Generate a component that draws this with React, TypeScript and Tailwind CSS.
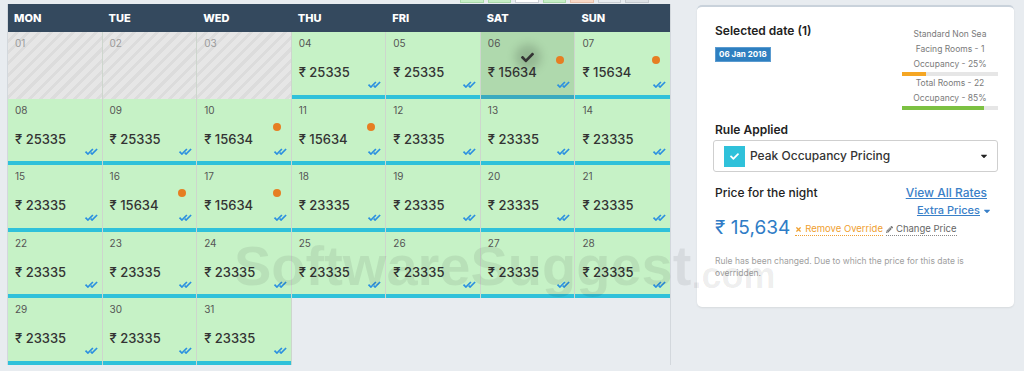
import React from "react";
import { FaCheck, FaCaretDown, FaTimes, FaPencilAlt } from "react-icons/fa";

type Day = { d: string; price?: string; dot?: boolean; sel?: boolean; off?: boolean };

const days: Day[] = [
  { d: "01", off: true },
  { d: "02", off: true },
  { d: "03", off: true },
  { d: "04", price: "25335" },
  { d: "05", price: "25335" },
  { d: "06", price: "15634", dot: true, sel: true },
  { d: "07", price: "15634", dot: true },
  { d: "08", price: "25335" },
  { d: "09", price: "25335" },
  { d: "10", price: "15634", dot: true },
  { d: "11", price: "15634", dot: true },
  { d: "12", price: "23335" },
  { d: "13", price: "23335" },
  { d: "14", price: "23335" },
  { d: "15", price: "23335" },
  { d: "16", price: "15634", dot: true },
  { d: "17", price: "15634", dot: true },
  ...Array.from({ length: 14 }, (_, i) => ({ d: String(18 + i), price: "23335" })),
];

const weekDays = ["MON", "TUE", "WED", "THU", "FRI", "SAT", "SUN"];

const legend = [
  "bg-[#c6efc6] border-[#a9d9a9]",
  "bg-[#c6efc6] border-[#a9d9a9]",
  "bg-white border-[#c9ced3]",
  "bg-[#c6efc6] border-[#a9d9a9]",
  "bg-[#f9d9c6] border-[#e7bfa8]",
  "bg-[#e9edf1] border-[#c9ced3]",
  "bg-[#dde1e5] border-[#c4c9ce]",
];

const DoubleCheck = () => (
  <svg width="16" height="7" viewBox="0 0 15 7" fill="none">
    <path d="M1 3.6L3.4 6L8.4 1" stroke="#2b90e0" strokeWidth="1.7" />
    <path d="M6.2 4.6L7.6 6L12.6 1" stroke="#2b90e0" strokeWidth="1.7" />
  </svg>
);

const Cell = ({ day, last }: { day: Day; last: boolean }) => {
  const edge = last ? "" : "border-r border-[#cdd6cd]";
  if (day.off) {
    return (
      <div
        className={`h-[66.6px] pl-[7px] pt-[5px] bg-[repeating-linear-gradient(135deg,#e6e6e6_0,#e6e6e6_5px,#dcdcdc_5px,#dcdcdc_8px)] ${edge}`}
      >
        <div className="text-[10px] leading-[13px] text-[#9b9b9b]">{day.d}</div>
      </div>
    );
  }
  return (
    <div className={`relative h-[66.6px] flex flex-col ${day.sel ? "bg-[#afd9ad]" : "bg-[#c6f2c6]"} ${edge}`}>
      <div className="pl-[7px] pt-[5px] text-[10px] leading-[13px] text-[#555]">{day.d}</div>
      <div className="pl-[7px] mt-[13px] text-[13px] leading-[18px] font-medium text-[#333]">
        ₹ {day.price}
      </div>
      <div className="flex justify-end pr-[2px]">
        <DoubleCheck />
      </div>
      <div className={`mt-auto h-[4px] ${day.sel ? "bg-[#3aaabf]" : "bg-[#2fc1da]"}`} />
      {day.dot && <div className="absolute top-[24px] right-[10px] w-[8px] h-[8px] rounded-full bg-[#e67e22]" />}
      {day.sel && (
        <div className="absolute left-[34px] top-[12px] w-[26px] h-[26px] flex items-center justify-center">
          <div className="absolute inset-0 rounded-full bg-black/15 blur-[4px]" />
          <FaCheck className="relative text-[#333] text-[13px]" />
        </div>
      )}
    </div>
  );
};

const App = () => {
  return (
    <div className="relative w-[1024px] h-[371px] overflow-hidden bg-[#e8ecf0] flex items-start font-['Inter','Noto_Sans',sans-serif]">
      <div className="ml-[7px] w-[664px] flex flex-col">
        <div className="h-[4px] flex gap-[4px] pl-[453px]">
          {legend.map((c, i) => (
            <div key={i} className={`w-[23.5px] h-[3px] border-x border-b ${c}`} />
          ))}
        </div>
        <div className="h-[361px] border-x border-[#d3d8dd]">
          <div className="grid grid-cols-7 h-[28px] bg-[#34495e]">
            {weekDays.map((w) => (
              <div key={w} className="flex items-center pl-[6px] text-[11px] font-extrabold text-white">
                {w}
              </div>
            ))}
          </div>
          <div className="grid grid-cols-7">
            {days.map((day, i) => (
              <Cell key={day.d} day={day} last={i % 7 === 6} />
            ))}
          </div>
        </div>
      </div>

      <div className="mt-[5px] ml-[26px] w-[317px] h-[302px] bg-white rounded-[5px] border-t-2 border-[#c9d2db] shadow-[0_1px_2px_rgba(0,0,0,0.08)] pl-[18px] pr-[16px] pt-[16px]">
        <div className="flex justify-between items-start">
          <div>
            <div className="text-[12px] leading-[16px] font-semibold text-[#222]">Selected date (1)</div>
            <div className="mt-[3px] inline-block bg-[#2e7fc0] border border-[#5a9bd0] text-white text-[8px] font-bold leading-[13px] px-[3px]">
              06 Jan 2018
            </div>
          </div>
          <div className="mt-[4px] w-[96px] text-center text-[8.5px] leading-[15px] text-[#7a7a7a]">
            <div>Standard Non Sea</div>
            <div>Facing Rooms - 1</div>
            <div>Occupancy - 25%</div>
            <div className="h-[4px] bg-[#e6e6e6]">
              <div className="h-full w-1/4 bg-[#f5a623]" />
            </div>
            <div>Total Rooms - 22</div>
            <div>Occupancy - 85%</div>
            <div className="h-[4px] bg-[#e6e6e6]">
              <div className="h-full w-[85%] bg-[#7cc142]" />
            </div>
          </div>
        </div>

        <div className="mt-[12px] text-[12px] leading-[16px] font-semibold text-[#222]">Rule Applied</div>
        <div className="-ml-[2px] mt-[2px] h-[32px] border border-[#cfcfcf] rounded-[3px] flex items-center pl-[10px] pr-[8px]">
          <div className="w-[21px] h-[21px] bg-[#2fc1da] flex items-center justify-center">
            <FaCheck className="text-white text-[9px]" />
          </div>
          <div className="ml-[5px] flex-1 text-[12px] font-medium text-[#333]">Peak Occupancy Pricing</div>
          <FaCaretDown className="text-[#222] text-[10px]" />
        </div>

        <div className="mt-[13px] flex justify-between items-center">
          <div className="text-[12px] leading-[16px] font-medium text-[#222]">Price for the night</div>
          <div className="mr-[11px] text-[12px] leading-[16px] font-medium text-[#3a80c8] underline">View All Rates</div>
        </div>
        <div className="mt-[3px] h-[13px] flex justify-end items-center mr-[6px] text-[11px] leading-[13px] font-medium text-[#3a80c8]">
          <span className="underline">Extra Prices </span>
          <FaCaretDown className="ml-[2px] text-[10px]" />
        </div>
        <div className="flex items-end h-[21px]">
          <div className="text-[19px] leading-[21px] text-[#2f7cc6]">₹ 15,634</div>
          <div className="ml-[5px] mb-[2px] flex items-center text-[9.5px] leading-[12px] text-[#f0a030] border-b border-dotted border-[#f0a030]">
            <FaTimes className="mr-[3px] text-[7px]" />
            Remove Override
          </div>
          <div className="ml-[3px] mb-[2px] flex items-center text-[9.5px] leading-[12px] text-[#666] border-b border-dotted border-[#888]">
            <FaPencilAlt className="mr-[3px] text-[7px] text-[#777]" />
            Change Price
          </div>
        </div>
        <div className="mt-[17px] text-[8.5px] leading-[12px] text-[#a0a0a0]">
          Rule has been changed. Due to which the price for this date is
          <br />
          overridden.
        </div>
      </div>

      <div className="pointer-events-none absolute left-[234px] top-[238px] flex items-end font-['Liberation_Sans',Arial,sans-serif] font-bold text-black/[0.07]">
        <span className="text-[56px] leading-[56px]">SoftwareSuggest</span>
        <span className="text-[36px] leading-[40px] mb-[-2px]">.com</span>
      </div>
    </div>
  );
};

export default App;
